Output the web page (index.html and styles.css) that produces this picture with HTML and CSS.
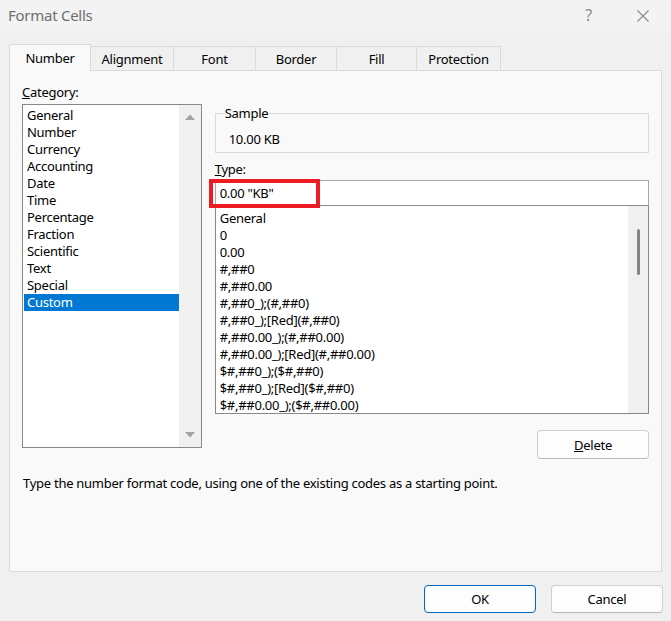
FILE: index.html
```html
<!DOCTYPE html>
<html>
<head>
<meta charset="utf-8">
<link rel="stylesheet" href="styles.css">
</head>
<body>
<div class="dialog">
  <div class="titlebar">
    <span class="title">Format Cells</span>
    <span class="help">?</span>
    <svg class="close" width="12" height="12" viewBox="0 0 12 12"><path d="M0.5 0.5 L11.5 11.5 M11.5 0.5 L0.5 11.5" stroke="#8a8a8a" stroke-width="1.1" fill="none"/></svg>
  </div>
  <div class="tabs">
    <div class="tab active">Number</div>
    <div class="tab w83">Alignment</div>
    <div class="tab w82">Font</div>
    <div class="tab w81">Border</div>
    <div class="tab w80">Fill</div>
    <div class="tab w84">Protection</div>
  </div>
  <div class="panel">
    <div class="columns">
      <div class="leftcol">
        <div class="label"><u>C</u>ategory:</div>
        <div class="catlist">
          <div class="items">
            <div class="item">General</div>
            <div class="item">Number</div>
            <div class="item">Currency</div>
            <div class="item">Accounting</div>
            <div class="item">Date</div>
            <div class="item">Time</div>
            <div class="item">Percentage</div>
            <div class="item">Fraction</div>
            <div class="item">Scientific</div>
            <div class="item">Text</div>
            <div class="item">Special</div>
            <div class="item selected">Custom</div>
          </div>
          <div class="vscroll">
            <svg class="arrow" width="10" height="6" viewBox="0 0 10 6"><path d="M0 6 L5 0.5 L10 6 Z" fill="#a3a3a3"/></svg>
            <svg class="arrow" width="10" height="6" viewBox="0 0 10 6"><path d="M0 0 L5 5.5 L10 0 Z" fill="#a3a3a3"/></svg>
          </div>
        </div>
      </div>
      <div class="rightcol">
        <fieldset class="sample">
          <legend>Sample</legend>
          <div class="sampleval">10.00 KB</div>
        </fieldset>
        <div class="label typelabel"><u>T</u>ype:</div>
        <div class="typebox">
          <div class="typeinput">0.00 "KB"</div>
          <div class="redmark"></div>
        </div>
        <div class="typelist">
          <div class="items titems">
            <div class="titem">General</div>
            <div class="titem">0</div>
            <div class="titem">0.00</div>
            <div class="titem">#,##0</div>
            <div class="titem">#,##0.00</div>
            <div class="titem">#,##0_);(#,##0)</div>
            <div class="titem">#,##0_);[Red](#,##0)</div>
            <div class="titem">#,##0.00_);(#,##0.00)</div>
            <div class="titem">#,##0.00_);[Red](#,##0.00)</div>
            <div class="titem">$#,##0_);($#,##0)</div>
            <div class="titem">$#,##0_);[Red]($#,##0)</div>
            <div class="titem">$#,##0.00_);($#,##0.00)</div>
          </div>
          <div class="tscroll"><div class="thumb"></div></div>
        </div>
        <div class="deleterow">
          <div class="btn"><u>D</u>elete</div>
        </div>
      </div>
    </div>
    <div class="desc">Type the number format code, using one of the existing codes as a starting point.</div>
  </div>
  <div class="buttons">
    <div class="btn primary">OK</div>
    <div class="btn">Cancel</div>
  </div>
</div>
</body>
</html>
```
FILE: styles.css
```css
html, body {
  margin: 0;
  padding: 0;
}
body {
  width: 671px;
  height: 621px;
  overflow: hidden;
  background: #f0f0f0;
  font-family: "Noto Sans", "Open Sans", sans-serif;
  font-size: 13px;
  letter-spacing: -0.27px;
  color: #000;
}
.dialog {
  width: 671px;
  height: 621px;
  display: flex;
  flex-direction: column;
}
.titlebar {
  height: 33px;
  background: #f3f3f3;
  display: flex;
  align-items: center;
  padding-left: 8px;
  padding-bottom: 4px;
  box-sizing: border-box;
}
.title {
  font-size: 15px;
  color: #6e6e6e;
  flex: 1;
}
.help {
  font-size: 16px;
  color: #8a8a8a;
  margin-right: 45px;
}
.close {
  margin-right: 22px;
  margin-top: 2px;
}
.tabs {
  display: flex;
  align-items: flex-start;
  height: 27px;
  margin: 11px 0 -1px 9px;
  position: relative;
  z-index: 1;
}
.tab {
  box-sizing: border-box;
  height: 24px;
  margin-top: 2px;
  margin-left: -1px;
  border: 1px solid #dadada;
  border-bottom: none;
  background: #f0f0f0;
  display: flex;
  align-items: center;
  justify-content: center;
}
.tab.active {
  width: 82px;
  height: 27px;
  margin-top: 0;
  margin-left: 0;
  background: #f9f9f9;
}
.w83 { width: 84px; }
.w82 { width: 83px; }
.w81 { width: 82px; }
.w80 { width: 81px; }
.w84 { width: 85px; }
.panel {
  box-sizing: border-box;
  margin: 0 9px;
  height: 502px;
  border: 1px solid #dadada;
  background: #f9f9f9;
  padding: 13px 12px 0 12px;
}
.columns {
  display: flex;
  gap: 13px;
}
.leftcol {
  width: 180px;
  display: flex;
  flex-direction: column;
}
.label {
  line-height: 17px;
  height: 17px;
}
.catlist {
  margin-top: 3px;
  box-sizing: border-box;
  height: 344px;
  border: 1px solid #888;
  background: #fff;
  display: flex;
}
.items {
  flex: 1;
  padding-top: 2px;
  overflow: hidden;
}
.titems {
  padding-top: 4px;
}
.item {
  line-height: 17px;
  height: 17px;
  padding-left: 3px;
  margin-left: 1px;
  white-space: nowrap;
}
.item.selected {
  background: #0078d4;
  color: #fff;
}
.vscroll {
  width: 22px;
  background: #f0f0f0;
  display: flex;
  flex-direction: column;
  justify-content: space-between;
  align-items: center;
  padding: 9px 0 9px 0;
}
.rightcol {
  width: 435px;
  margin-top: 21px;
  display: flex;
  flex-direction: column;
}
.sample {
  margin: 0;
  border: 1px solid #dadada;
  padding: 0 8px 4px 8px;
  height: 48px;
  box-sizing: border-box;
}
.sample legend {
  padding: 0 1px;
  line-height: 17px;
}
.sampleval {
  line-height: 17px;
  padding-top: 9px;
  padding-left: 5px;
}
.typelabel {
  margin-top: 8px;
}
.typebox {
  position: relative;
  margin-top: 2px;
}
.typeinput {
  box-sizing: border-box;
  height: 26px;
  border: 1px solid #a8a8a8;
  border-bottom-color: #8a8a8a;
  background: #fff;
  line-height: 25px;
  padding-left: 4px;
}
.redmark {
  position: absolute;
  left: -6px;
  top: -1px;
  width: 111px;
  height: 29px;
  box-sizing: border-box;
  border: 4px solid #ec1c24;
}
.typelist {
  box-sizing: border-box;
  height: 208px;
  border: 1px solid #888;
  border-top: none;
  background: #fff;
  display: flex;
}
.titem {
  line-height: 17px;
  height: 17px;
  padding-left: 4px;
  white-space: nowrap;
}
.tscroll {
  width: 20px;
  background: #f0f0f0;
  display: flex;
  justify-content: center;
  padding-top: 23px;
  box-sizing: border-box;
}
.thumb {
  width: 3px;
  height: 46px;
  background: #858585;
  border-radius: 1.5px;
}
.deleterow {
  display: flex;
  justify-content: flex-end;
  margin-top: 16px;
}
.btn {
  box-sizing: border-box;
  width: 112px;
  height: 29px;
  border: 1px solid #d0d0d0;
  border-bottom-color: #b8b8b8;
  border-radius: 4px;
  background: #fdfdfd;
  display: flex;
  align-items: center;
  justify-content: center;
}
.desc {
  margin-top: 16px;
  line-height: 17px;
  padding-left: 1px;
}
.buttons {
  display: flex;
  justify-content: flex-end;
  gap: 15px;
  margin-top: 13px;
  padding-right: 8px;
}
.buttons .btn {
  height: 28px;
}
.btn.primary {
  border-color: #0067c0;
}
```
